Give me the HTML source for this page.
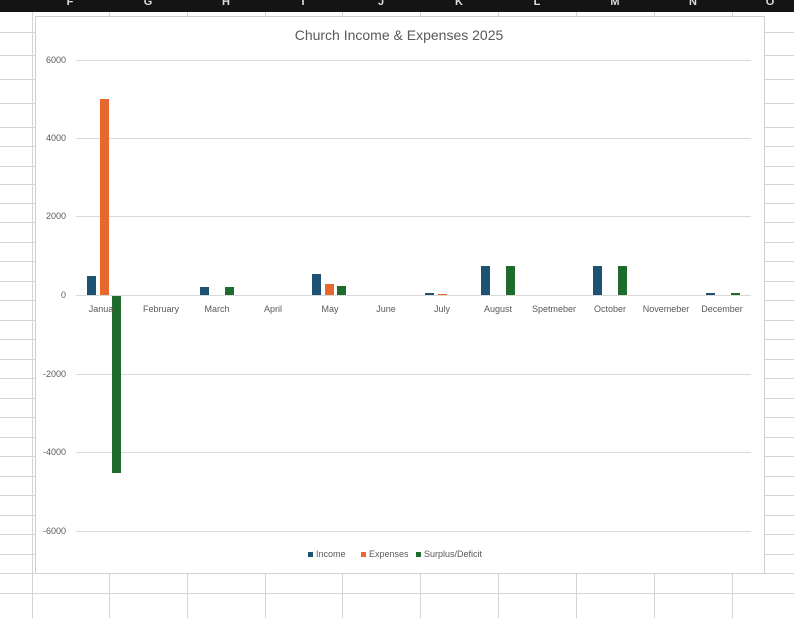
<!DOCTYPE html>
<html><head><style>
body{margin:0;width:794px;height:618px;overflow:hidden;background:#fff;font-family:"Liberation Sans",sans-serif;position:relative}
.hdr{position:absolute;left:0;top:0;width:794px;height:12px;background:#111}
</style></head><body>
<svg width="794" height="618" style="position:absolute;left:0;top:0" font-family="Liberation Sans, sans-serif">
<g stroke="#d4d4d4" stroke-width="1">
<line x1="0" y1="32.5" x2="794" y2="32.5"/><line x1="0" y1="55.5" x2="794" y2="55.5"/><line x1="0" y1="79.5" x2="794" y2="79.5"/><line x1="0" y1="103.5" x2="794" y2="103.5"/><line x1="0" y1="127.5" x2="794" y2="127.5"/><line x1="0" y1="146.5" x2="794" y2="146.5"/><line x1="0" y1="166.5" x2="794" y2="166.5"/><line x1="0" y1="184.5" x2="794" y2="184.5"/><line x1="0" y1="203.5" x2="794" y2="203.5"/><line x1="0" y1="222.5" x2="794" y2="222.5"/><line x1="0" y1="242.5" x2="794" y2="242.5"/><line x1="0" y1="261.5" x2="794" y2="261.5"/><line x1="0" y1="281.5" x2="794" y2="281.5"/><line x1="0" y1="300.5" x2="794" y2="300.5"/><line x1="0" y1="320.5" x2="794" y2="320.5"/><line x1="0" y1="339.5" x2="794" y2="339.5"/><line x1="0" y1="359.5" x2="794" y2="359.5"/><line x1="0" y1="378.5" x2="794" y2="378.5"/><line x1="0" y1="398.5" x2="794" y2="398.5"/><line x1="0" y1="417.5" x2="794" y2="417.5"/><line x1="0" y1="437.5" x2="794" y2="437.5"/><line x1="0" y1="456.5" x2="794" y2="456.5"/><line x1="0" y1="476.5" x2="794" y2="476.5"/><line x1="0" y1="495.5" x2="794" y2="495.5"/><line x1="0" y1="515.5" x2="794" y2="515.5"/><line x1="0" y1="534.5" x2="794" y2="534.5"/><line x1="0" y1="554.5" x2="794" y2="554.5"/><line x1="0" y1="573.5" x2="794" y2="573.5"/><line x1="0" y1="593.5" x2="794" y2="593.5"/>
<line x1="32.5" y1="0" x2="32.5" y2="618"/><line x1="109.5" y1="0" x2="109.5" y2="618"/><line x1="187.5" y1="0" x2="187.5" y2="618"/><line x1="265.5" y1="0" x2="265.5" y2="618"/><line x1="342.5" y1="0" x2="342.5" y2="618"/><line x1="420.5" y1="0" x2="420.5" y2="618"/><line x1="498.5" y1="0" x2="498.5" y2="618"/><line x1="576.5" y1="0" x2="576.5" y2="618"/><line x1="654.5" y1="0" x2="654.5" y2="618"/><line x1="732.5" y1="0" x2="732.5" y2="618"/>
</g>
<rect x="0" y="0" width="794" height="12" fill="#141414"/>
<g fill="#ddd" font-size="11" font-weight="bold" text-anchor="middle">
<text x="70" y="5">F</text><text x="148" y="5">G</text><text x="226" y="5">H</text><text x="303" y="5">I</text><text x="381" y="5">J</text><text x="459" y="5">K</text><text x="537" y="5">L</text><text x="615" y="5">M</text><text x="693" y="5">N</text><text x="770" y="5">O</text>
</g>
<rect x="35.5" y="16.5" width="729" height="557" fill="#fff" stroke="#d0d0d0"/>
<text x="399" y="40" font-size="14" fill="#595959" text-anchor="middle">Church Income &amp; Expenses 2025</text>
<g stroke="#d9d9d9"><line x1="76" y1="60.5" x2="751" y2="60.5"/><line x1="76" y1="138.5" x2="751" y2="138.5"/><line x1="76" y1="216.5" x2="751" y2="216.5"/><line x1="76" y1="295.5" x2="751" y2="295.5"/><line x1="76" y1="374.5" x2="751" y2="374.5"/><line x1="76" y1="452.5" x2="751" y2="452.5"/><line x1="76" y1="531.5" x2="751" y2="531.5"/></g>
<g font-size="9" fill="#595959" text-anchor="end">
<text x="66" y="63">6000</text><text x="66" y="141">4000</text><text x="66" y="219">2000</text><text x="66" y="298">0</text><text x="66" y="377">-2000</text><text x="66" y="455">-4000</text><text x="66" y="534">-6000</text></g>
<g fill="#1d5273">
<rect x="87" y="276" width="9" height="19"/><rect x="200" y="287" width="9" height="8"/><rect x="312" y="274" width="9" height="21"/><rect x="425" y="293" width="9" height="2"/><rect x="481" y="266" width="9" height="29"/><rect x="593" y="266" width="9" height="29"/><rect x="706" y="293" width="9" height="2"/></g>
<g fill="#e8672f"><rect x="100" y="99" width="9" height="196"/><rect x="325" y="284" width="9" height="11"/><rect x="438" y="294" width="9" height="1"/></g>
<g fill="#1e6b2b"><rect x="112" y="296" width="9" height="177"/><rect x="225" y="287" width="9" height="8"/><rect x="337" y="286" width="9" height="9"/><rect x="506" y="266" width="9" height="29"/><rect x="618" y="266" width="9" height="29"/><rect x="731" y="293" width="9" height="2"/></g>
<g font-size="9" fill="#595959" text-anchor="middle">
<text x="101" y="312">Janua</text><text x="161" y="312">February</text><text x="217" y="312">March</text><text x="273" y="312">April</text><text x="330" y="312">May</text><text x="386" y="312">June</text><text x="442" y="312">July</text><text x="498" y="312">August</text><text x="554" y="312">Spetmeber</text><text x="610" y="312">October</text><text x="666" y="312">Novemeber</text><text x="722" y="312">December</text></g>
<g font-size="9" fill="#595959">
<rect x="308" y="552" width="5" height="5" fill="#1d5273"/><text x="316" y="557">Income</text>
<rect x="361" y="552" width="5" height="5" fill="#e8672f"/><text x="369" y="557">Expenses</text>
<rect x="416" y="552" width="5" height="5" fill="#1e6b2b"/><text x="424" y="557">Surplus/Deficit</text></g>
</svg>
</body></html>
